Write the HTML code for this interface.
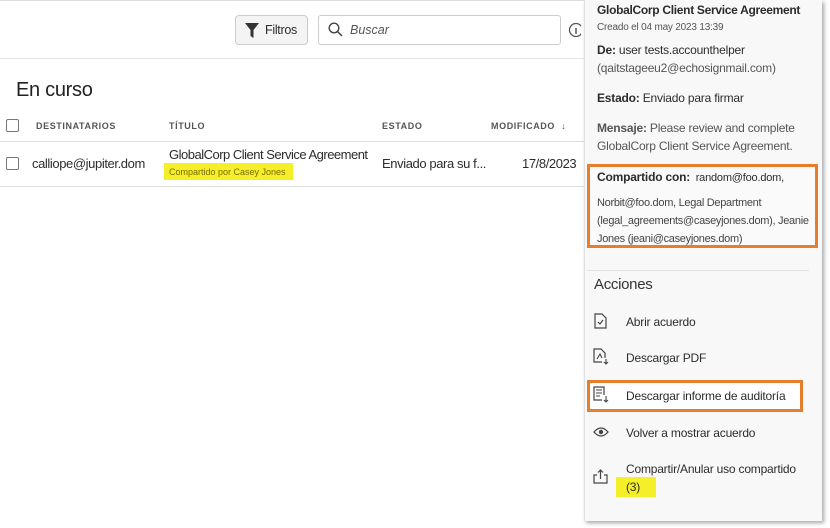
<!DOCTYPE html>
<html><head><meta charset="utf-8"><style>
*{box-sizing:border-box;margin:0;padding:0}
body{width:830px;height:528px;background:#fff;font-family:"Liberation Sans",sans-serif;color:#2c2c2c;position:relative;overflow:hidden}
.a{position:absolute;white-space:nowrap}
.panel{position:absolute;left:584px;top:0;width:238px;height:521px;background:#f8f8f8;border-left:1px solid #e1e1e1;box-shadow:2px 2px 4px rgba(0,0,0,.35)}
.t{font-size:12px;letter-spacing:-0.2px}
b{font-weight:bold}
</style></head><body>
<div style="position:absolute;left:0;top:0;width:584px;height:1px;background:#ddd"></div>
<div class="a" style="left:235px;top:15px;width:73px;height:30px;border:1px solid #ccc;border-radius:4px;background:#f4f4f4"></div>
<svg class="a" style="left:245px;top:23px" width="14" height="15" viewBox="0 0 14 15"><path d="M0 0H14L8.5 7V15L5.5 13V7Z" fill="#333"/></svg>
<div class="a" style="left:265px;top:23px;font-size:12.5px;letter-spacing:-0.3px">Filtros</div>
<div class="a" style="left:318px;top:15px;width:243px;height:30px;border:1px solid #ccc;border-radius:3px"></div>
<svg class="a" style="left:328px;top:22px" width="15" height="15" viewBox="0 0 15 15"><circle cx="6" cy="6" r="4.8" fill="none" stroke="#444" stroke-width="1.4"/><path d="M9.5 9.5L14 14" stroke="#444" stroke-width="1.5"/></svg>
<div class="a" style="left:350px;top:23px;font-size:12.5px;font-style:italic;color:#555">Buscar</div>
<svg class="a" style="left:567px;top:22px" width="14" height="16"><circle cx="9" cy="8" r="6.5" fill="none" stroke="#555" stroke-width="1.3"/><path d="M9 6v6" stroke="#555" stroke-width="1.5"/></svg>
<div class="a" style="left:0;top:58px;width:584px;height:1px;background:#e6e6e6"></div>
<div class="a" style="left:16px;top:79px;font-size:20px;color:#222;letter-spacing:-0.3px">En curso</div>
<div class="a" style="left:6px;top:119px;width:13px;height:13px;border:1px solid #777;border-radius:2px"></div>
<div class="a" style="left:36px;top:121px;font-size:9px;font-weight:bold;letter-spacing:.6px;color:#555">DESTINATARIOS</div>
<div class="a" style="left:169px;top:121px;font-size:9px;font-weight:bold;letter-spacing:.6px;color:#555">TÍTULO</div>
<div class="a" style="left:382px;top:121px;font-size:9px;font-weight:bold;letter-spacing:.6px;color:#555">ESTADO</div>
<div class="a" style="left:491px;top:121px;font-size:9px;font-weight:bold;letter-spacing:.6px;color:#555">MODIFICADO &nbsp;↓</div>
<div class="a" style="left:0;top:141px;width:584px;height:1px;background:#ddd"></div>
<div class="a" style="left:6px;top:157px;width:13px;height:13px;border:1px solid #777;border-radius:2px"></div>
<div class="a" style="left:32px;top:156px;font-size:13px;letter-spacing:-0.4px">calliope@jupiter.dom</div>
<div class="a" style="left:169px;top:147px;font-size:13px;letter-spacing:-0.5px">GlobalCorp Client Service Agreement</div>
<div class="a" style="left:164px;top:163px;height:17px;background:#f5ef2a;width:129px"></div>
<div class="a" style="left:169px;top:167px;font-size:9px;color:#7a6a00">Compartido por Casey Jones</div>
<div class="a" style="left:382px;top:156px;font-size:13px;letter-spacing:-0.4px">Enviado para su f...</div>
<div class="a" style="left:522px;top:156px;font-size:13px;letter-spacing:-0.4px">17/8/2023</div>
<div class="a" style="left:0;top:186px;width:584px;height:1px;background:#ddd"></div>

<div class="panel"></div>
<div class="a" style="left:597px;top:3px;font-size:12px;font-weight:bold;letter-spacing:-0.3px">GlobalCorp Client Service Agreement</div>
<div class="a" style="left:597px;top:22px;font-size:10px;color:#555;letter-spacing:-0.2px">Creado el 04 may 2023 13:39</div>
<div class="a t" style="left:597px;top:43px"><b>De:</b> user tests.accounthelper</div>
<div class="a t" style="left:597px;top:61px;color:#555">(qaitstageeu2@echosignmail.com)</div>
<div class="a t" style="left:597px;top:91px"><b>Estado:</b> Enviado para firmar</div>
<div class="a t" style="left:597px;top:121px;color:#555"><b>Mensaje:</b> Please review and complete</div>
<div class="a t" style="left:597px;top:139px;color:#555">GlobalCorp Client Service Agreement.</div>
<div class="a" style="left:587px;top:164px;width:231px;height:84px;border:3px solid #e57f2d;background:#fafafa"></div>
<div class="a" style="left:597px;top:170px;font-size:11px;letter-spacing:-0.2px"><b style="font-size:12px">Compartido con:</b>&nbsp; random@foo.dom,</div>
<div class="a" style="left:597px;top:194px;font-size:11px;color:#444;line-height:18px;letter-spacing:-0.3px">Norbit@foo.dom, Legal Department<br>(legal_agreements@caseyjones.dom), Jeanie<br>Jones (jeani@caseyjones.dom)</div>
<div class="a" style="left:587px;top:270px;width:222px;height:1px;background:#e2e2e2"></div>
<div class="a" style="left:594px;top:276px;font-size:15px;color:#333;letter-spacing:-0.3px">Acciones</div>
<svg class="a" style="left:594px;top:313px" width="13" height="16"><path d="M1 1h7l4 4v10H1z" fill="none" stroke="#444" stroke-width="1.2"/><path d="M4 9l2 2 3-4" fill="none" stroke="#444" stroke-width="1.2"/></svg>
<div class="a t" style="left:626px;top:315px">Abrir acuerdo</div>
<svg class="a" style="left:593px;top:348px" width="16" height="17"><path d="M9 14H1V1h7l4 4v5" fill="none" stroke="#444" stroke-width="1.2"/><path d="M4 11l3-5 2 4M13 11v5M11 14l2 2 2-2" fill="none" stroke="#444" stroke-width="1.1"/></svg>
<div class="a t" style="left:626px;top:351px">Descargar PDF</div>
<div class="a" style="left:587px;top:380px;width:216px;height:32px;border:3px solid #e57f2d;background:#fff"></div>
<svg class="a" style="left:593px;top:386px" width="16" height="17"><path d="M9 14H1V1h10v8" fill="none" stroke="#444" stroke-width="1.2"/><path d="M3 4h6M3 7h6M3 10h4M13 10v6M11 14l2 2 2-2" fill="none" stroke="#444" stroke-width="1.1"/></svg>
<div class="a t" style="left:626px;top:389px">Descargar informe de auditoría</div>
<svg class="a" style="left:593px;top:426px" width="16" height="12"><path d="M1 6Q8-2 15 6Q8 14 1 6z" fill="none" stroke="#444" stroke-width="1.3"/><circle cx="8" cy="6" r="2.2" fill="#444"/></svg>
<div class="a t" style="left:626px;top:426px">Volver a mostrar acuerdo</div>
<svg class="a" style="left:593px;top:469px" width="15" height="15"><path d="M4 6H1v8h13V6h-3M7.5 10V1M5 3.5l2.5-2.5 2.5 2.5" fill="none" stroke="#444" stroke-width="1.2"/></svg>
<div class="a t" style="left:626px;top:462px">Compartir/Anular uso compartido</div>
<div class="a" style="left:616px;top:477px;width:40px;height:20px;background:#f5ef2a"></div>
<div class="a t" style="left:626px;top:480px">(3)</div>
</body></html>
